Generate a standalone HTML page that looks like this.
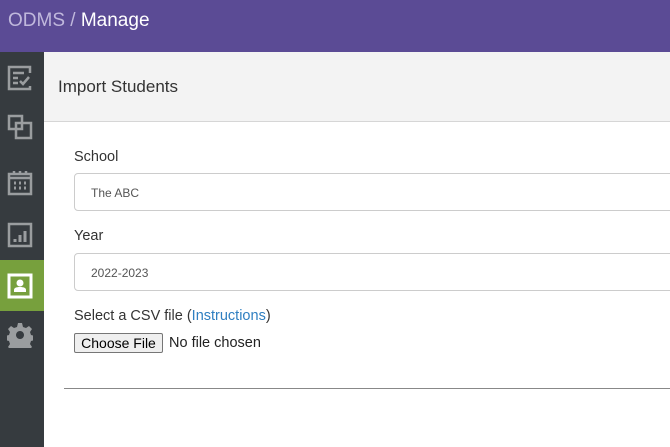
<!DOCTYPE html>
<html><head><style>
body{margin:0;width:670px;height:447px;overflow:hidden;font-family:"Liberation Sans",sans-serif;background:#fff;position:relative}
.top{position:absolute;left:0;top:0;width:670px;height:52px;background:#5b4b95}
.top span{position:absolute;left:8px;top:10px;font-size:19px;color:#c0b8dc}
.top b{color:#fff;font-weight:normal}
.side{position:absolute;left:0;top:52px;width:44px;height:395px;background:#363b3f}
.act{position:absolute;left:0;top:208px;width:44px;height:51px;background:#77a03d}
svg{position:absolute;left:7px}
.ph{position:absolute;left:44px;top:52px;width:626px;height:69px;background:#f3f3f3;border-bottom:1px solid #d6d6d6}
.ph span{position:absolute;left:14px;top:25px;font-size:17px;color:#333}
.lbl{position:absolute;left:74px;font-size:14.5px;color:#333}
.inp{position:absolute;left:74px;width:610px;height:38px;border:1px solid #ccc;border-radius:4px;box-sizing:border-box}
.inp span{position:absolute;left:16px;top:12px;font-size:12px;color:#555}
.btn{position:absolute;left:74px;top:333px;width:89px;height:20px;border:1px solid #767676;border-radius:2px;background:#efefef;box-sizing:border-box;font-size:14px;text-align:center;line-height:18px;color:#000}
hr{position:absolute;left:64px;top:388px;width:620px;margin:0;border:0;border-top:1px solid #888}
</style></head><body>
<div class="top"><span>ODMS / <b>Manage</b></span></div>
<div class="side">
<div class="act"></div>
<svg style="top:13px" width="26" height="26" viewBox="0 0 26 26" fill="none" stroke="#9a9d9f" stroke-width="2.5"><path d="M23 8V2H2v22h21v-3"/><path d="M6 8h11M6 13h5M6 18h5M13 16l3 3 6-7"/></svg>
<svg style="top:62px" width="26" height="26" viewBox="0 0 26 26" fill="none" stroke="#9a9d9f" stroke-width="2.5"><path d="M2 2h13v13H2zM9 9h15v15H9z"/></svg>
<svg style="top:118px" width="26" height="26" viewBox="0 0 26 26" fill="none" stroke="#9a9d9f" stroke-width="2.5"><path d="M2 4h22v20H2z M2 8h22"/><path d="M7 1v4M13 1v4M19 1v4" /><path d="M7 13h2M12 13h2M17 13h2M7 18h2M12 18h2M17 18h2" stroke-width="3"/></svg>
<svg style="top:170px" width="26" height="26" viewBox="0 0 26 26" fill="none" stroke="#9a9d9f" stroke-width="2.5"><path d="M2 2h22v22H2z"/><path d="M8 17v3M13 13v7M18 9v11" stroke-width="3"/></svg>
<svg style="top:221px" width="26" height="26" viewBox="0 0 26 26" fill="none" stroke="#fff" stroke-width="3"><path d="M2 2h22v22H2z"/><circle cx="13" cy="10" r="3.5" fill="#fff" stroke="none"/><path d="M7 19h12v-2c0-2-2-3-6-3s-6 1-6 3z" fill="#fff" stroke="none"/></svg>
<svg style="top:270px" width="26" height="26" viewBox="0 0 26 26"><path fill="#9a9d9f" fill-rule="evenodd" d="M11 1h4l1 4 3 1 3-2 3 3-2 3 1 3 4 1v4l-4 1-1 3 2 3-3 3-3-2-3 1-1 4h-4l-1-4-3-1-3 2-3-3 2-3-1-3-4-1v-4l4-1 1-3-2-3 3-3 3 2 3-1zM13 9a4 4 0 1 0 0.01 0z"/></svg>
</div>
<div class="ph"><span>Import Students</span></div>
<div class="lbl" style="top:149px">School</div>
<div class="inp" style="top:173px"><span>The ABC</span></div>
<div class="lbl" style="top:228px">Year</div>
<div class="inp" style="top:253px"><span>2022-2023</span></div>
<div class="lbl" style="top:308px">Select a CSV file (<span style="color:#2f7fc1">Instructions</span>)</div>
<div class="btn">Choose File</div>
<div class="lbl" style="top:335px;left:169px;color:#222">No file chosen</div>
<hr>
</body></html>
